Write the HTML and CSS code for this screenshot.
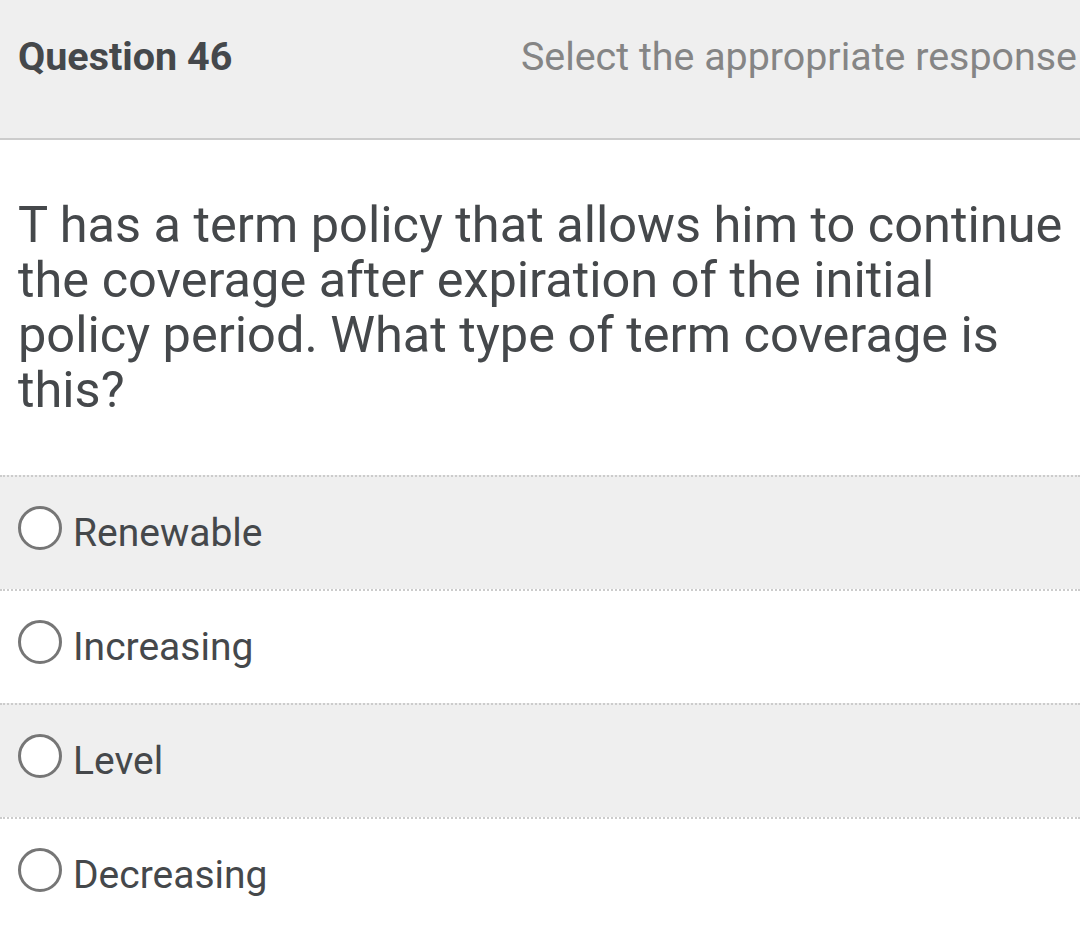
FILE: index.html
```html
<!DOCTYPE html>
<html lang="en">
<head>
<meta charset="utf-8">
<title>Question 46</title>
<link rel="stylesheet" href="styles.css">
</head>
<body>
<header class="qhead">
  <h1 class="qnum">Question 46</h1>
  <span class="qhint">Select the appropriate response</span>
</header>
<main class="qbody">
  <p class="qtext">T has a term policy that allows him to continue the coverage after expiration of the initial policy period. What type of term coverage is this?</p>
  <ul class="options">
    <li class="option shaded"><span class="radio"></span><span class="label">Renewable</span></li>
    <li class="option"><span class="radio"></span><span class="label">Increasing</span></li>
    <li class="option shaded"><span class="radio"></span><span class="label">Level</span></li>
    <li class="option"><span class="radio"></span><span class="label">Decreasing</span></li>
  </ul>
</main>
</body>
</html>
```

FILE: styles.css
```css
html, body {
  margin: 0;
  padding: 0;
  background: #ffffff;
  font-family: Roboto, "Liberation Sans", Arial, sans-serif;
  color: #45484b;
  overflow: hidden;
}

.qhead {
  display: flex;
  align-items: flex-start;
  justify-content: space-between;
  height: 140px;
  box-sizing: border-box;
  padding: 33px 3px 0 18px;
  background: #efefef;
  border-bottom: 2px solid #cccccc;
  white-space: nowrap;
}

.qnum {
  margin: 0;
  font-size: 39.5px;
  line-height: 48px;
  font-weight: 700;
  color: #45484b;
}

.qhint {
  font-size: 39.4px;
  line-height: 48px;
  color: #858585;
}

.qbody {
  display: flex;
  flex-direction: column;
}

.qtext {
  margin: 0;
  padding: 57px 12px 58px 18px;
  font-size: 50.5px;
  line-height: 55px;
  color: #45484b;
}

.options {
  list-style: none;
  margin: 0;
  padding: 0;
}

.option {
  display: flex;
  align-items: center;
  gap: 11px;
  height: 114px;
  box-sizing: border-box;
  padding-left: 18px;
  border-top: 2px dotted #cccccc;
  background: #ffffff;
}

.option.shaded {
  background: #efefef;
}

.radio {
  width: 44px;
  height: 44px;
  box-sizing: border-box;
  border: 3px solid #767676;
  border-radius: 50%;
  background: #ffffff;
  margin-bottom: 10px;
  flex: none;
}

.label {
  font-size: 39px;
  line-height: 46px;
  color: #45484b;
}
```
